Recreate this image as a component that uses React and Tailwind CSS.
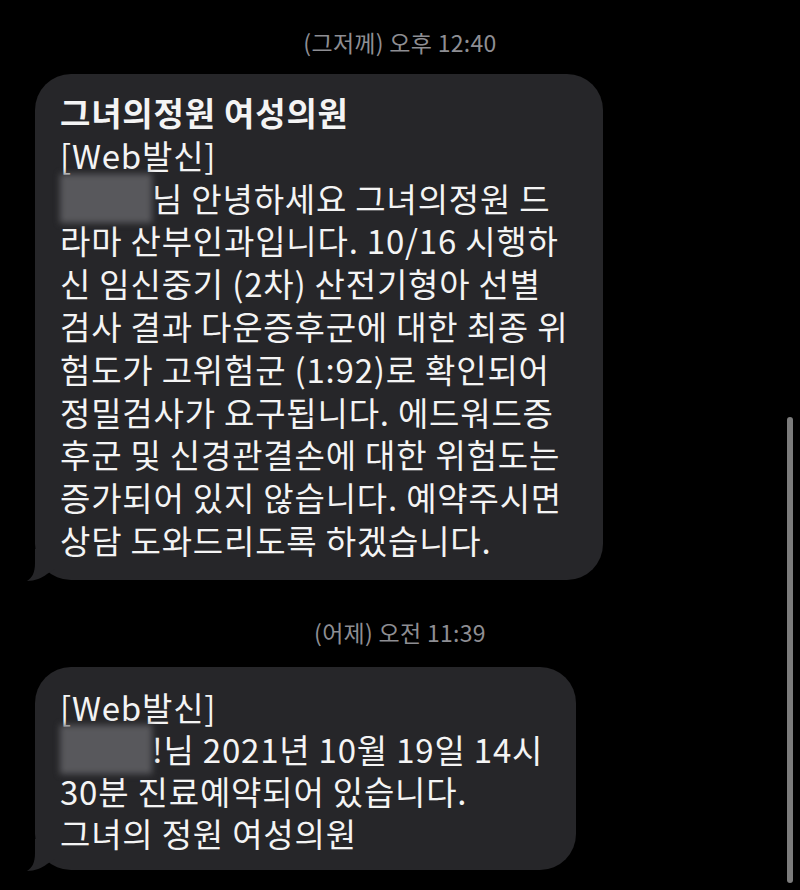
const FONT = {
  fontFamily: '"Noto Sans CJK KR", "Noto Sans", sans-serif',
};

function Blur() {
  return (
    <span className="relative inline-block align-top w-[92px] h-[42px]">
      <span className="absolute left-0 right-0 -top-[3px] -bottom-[4px] bg-[#58585c] blur-[3px]" />
    </span>
  );
}

function Tail() {
  return (
    <svg
      className="absolute -left-[10px] -bottom-[1px]"
      width="30"
      height="32"
      viewBox="0 0 30 32"
    >
      <path
        d="M10 0 L10 14 C10 24 7 29 2 32 C10 32 17 29 22 25 L30 20 L30 0 Z"
        fill="#262629"
      />
    </svg>
  );
}

function Stamp({ children }) {
  return (
    <div className="text-center text-[23px] leading-[28px] tracking-[0.3px] text-[#8e8e93]">
      {children}
    </div>
  );
}

function Bubble({ width, className, children }) {
  return (
    <div
      className={`relative ml-[35px] rounded-[36px] bg-[#262629] pl-[25px] text-[33px] tracking-[0.8px] text-[#f4f4f4] whitespace-nowrap ${width} ${className}`}
    >
      {children}
      <Tail />
    </div>
  );
}

export default function App() {
  return (
    <div
      className="relative w-full h-[890px] bg-black overflow-hidden pt-[28px]"
      style={FONT}
    >
      <Stamp>(그저께) 오후 12:40</Stamp>

      <Bubble
        width="w-[568px]"
        className="mt-[18px] pt-[17px] pb-[18px] leading-[42.8px]"
      >
        <div className="font-semibold">그녀의정원 여성의원</div>
        <div>[Web발신]</div>
        <div>
          <Blur />님 안녕하세요 그녀의정원 드
        </div>
        <div>라마 산부인과입니다. 10/16 시행하</div>
        <div>신 임신중기 (2차) 산전기형아 선별</div>
        <div>검사 결과 다운증후군에 대한 최종 위</div>
        <div>험도가 고위험군 (1:92)로 확인되어</div>
        <div>정밀검사가 요구됩니다. 에드워드증</div>
        <div>후군 및 신경관결손에 대한 위험도는</div>
        <div>증가되어 있지 않습니다. 예약주시면</div>
        <div>상담 도와드리도록 하겠습니다.</div>
      </Bubble>

      <div className="mt-[38px]">
        <Stamp>(어제) 오전 11:39</Stamp>
      </div>

      <Bubble
        width="w-[541px]"
        className="mt-[21px] pt-[19px] pb-[16px] leading-[42px]"
      >
        <div>[Web발신]</div>
        <div>
          <Blur />!님 2021년 10월 19일 14시
        </div>
        <div>30분 진료예약되어 있습니다.</div>
        <div>그녀의 정원 여성의원</div>
      </Bubble>

      <div className="absolute right-[7px] top-[417px] w-[6px] h-[466px] rounded-full bg-[#7c7c7c]" />
    </div>
  );
}
